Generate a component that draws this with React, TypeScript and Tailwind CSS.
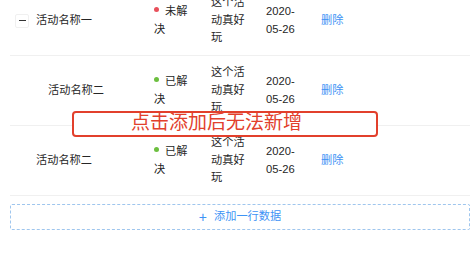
import React from "react";

type Row = {
  name: string;
  status: "未解决" | "已解决";
  child?: boolean;
  expand?: boolean;
};

const rows: Row[] = [
  { name: "活动名称一", status: "未解决", expand: true },
  { name: "活动名称二", status: "已解决", child: true },
  { name: "活动名称二", status: "已解决" },
];

function StatusCell({ status }: { status: Row["status"] }) {
  const red = status === "未解决";
  return (
    <div className="w-[36px] break-all">
      <span
        className={
          red
            ? "mr-[6px] inline-block h-[5px] w-[5px] rounded-full bg-[#e8505b] align-middle relative -top-[2px]"
            : "mr-[6px] inline-block h-[5px] w-[5px] rounded-full bg-[#6cbf3f] align-middle relative -top-[2px]"
        }
      />
      {status}
    </div>
  );
}

export default function App() {
  return (
    <div
      className="relative h-[261px] w-[474px] overflow-hidden bg-white text-[11.2px] leading-[17.6px] text-[#262626]"
      style={{ fontFamily: '"Liberation Sans", "Noto Sans CJK SC", sans-serif' }}
    >
      <div className="-mt-[14px] pl-[10px] pr-[4px]">
        {rows.map((r, i) => (
          <div key={i} className="flex h-[70px] items-center border-b border-[#f0f0f0]">
            <div className="flex w-[143px] items-center">
              {r.child ? (
                <span className="pl-[38px]">{r.name}</span>
              ) : (
                <div className="flex items-center pl-[5px]">
                  {r.expand ? (
                    <span className="mr-[7px] flex h-[14px] w-[14px] items-center justify-center rounded-[2px] border border-[#f0f0f0] bg-white">
                      <span className="h-[1px] w-[7px] bg-[#333]" />
                    </span>
                  ) : (
                    <span className="mr-[7px] h-[14px] w-[14px]" />
                  )}
                  <span>{r.name}</span>
                </div>
              )}
            </div>
            <div className="w-[57px] pl-[1px]">
              <StatusCell status={r.status} />
            </div>
            <div className="w-[55px] pl-[1px]">
              <div className="w-[34px] break-all">这个活动真好玩</div>
            </div>
            <div className="w-[55px] pl-[1px]">
              <div className="w-[40px]">
                2020-
                <br />
                05-26
              </div>
            </div>
            <div className="pl-[1px] text-[#3e93f5]">删除</div>
          </div>
        ))}
      </div>

      <div className="mt-[8px] pl-[10px] pr-[4px]">
        <div className="flex h-[26px] items-center justify-center rounded-[2px] border border-dashed border-[#9fc6ee] text-[#3e93f5]">
          <span className="mr-[7px] text-[14px] leading-[14px] font-light">+</span>
          <span>添加一行数据</span>
        </div>
      </div>

      <div className="absolute left-[72px] top-[111px] h-[26px] w-[306px] rounded-[4px] border-2 border-[#e2402c] bg-white pl-[57px] text-[19px] leading-[20px] text-[#e2402c]">
        点击添加后无法新增
      </div>
    </div>
  );
}
